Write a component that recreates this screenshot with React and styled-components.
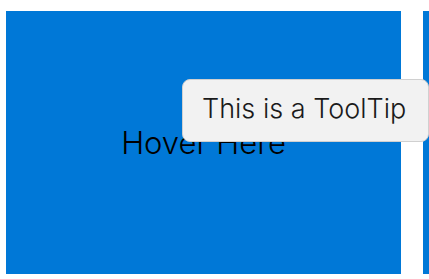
import React from 'react';
import styled, { createGlobalStyle } from 'styled-components';

const Global = createGlobalStyle`
    html, body {
        margin: 0;
        padding: 0;
        background: #fff;
        overflow: hidden;
    }
    body {
        font-family: Inter, "Noto Sans", sans-serif;
    }
`

const Row = styled.div`
    display: flex;
    gap: 22px;
    padding: 11px 0 0 6px;
    width: max-content;
`

const Box = styled.div`
    position: relative;
    flex: none;
    display: flex;
    align-items: center;
    justify-content: center;
    width: 395px;
    height: 263px;
    background: #0078d7;
    color: #000;
    font-size: 31px;
    font-weight: 300;
`

const Tip = styled.div`
    position: absolute;
    left: 176px;
    top: 68px;
    box-sizing: border-box;
    width: 247px;
    height: 63px;
    display: flex;
    align-items: center;
    padding: 0 0 4px 19px;
    background: #f2f2f2;
    border: 1px solid #d0d0d0;
    border-radius: 8px;
    color: #1a1a1a;
    font-size: 27px;
    font-weight: 300;
    white-space: nowrap;
    z-index: 2;
`

function App() {
    return (
        <>
            <Global />
            <Row>
                <Box>
                    <span>Hover Here</span>
                    <Tip>This is a ToolTip</Tip>
                </Box>
                <Box />
            </Row>
        </>
    )
}

export default App
